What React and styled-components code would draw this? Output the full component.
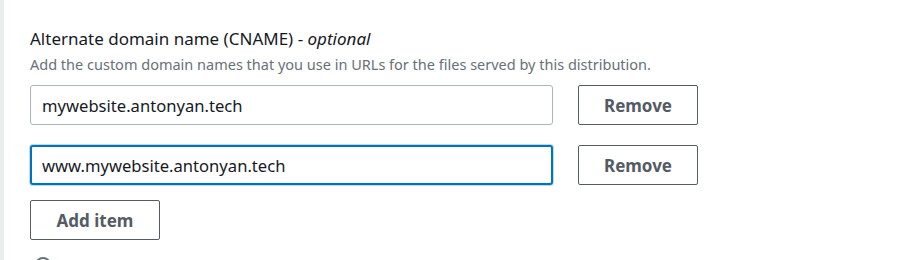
import React from 'react'
import styled, { createGlobalStyle } from 'styled-components'

const GlobalStyle = createGlobalStyle`
  html, body {
    margin: 0;
    padding: 0;
    background: #fff;
    font-family: 'Noto Sans', 'Open Sans', Arial, sans-serif;
  }
`

const Page = styled.div`
  display: flex;
  width: 922px;
  height: 260px;
  overflow: hidden;
  background: #fff;
`

const SideRail = styled.div`
  width: 4px;
  flex: none;
  background: #eaeded;
`

const Section = styled.div`
  flex: 1;
  padding: 28px 0 0 26px;
`

const Label = styled.div`
  font-size: 17px;
  line-height: 22px;
  color: #16191f;

  em {
    font-style: italic;
  }
`

const Description = styled.div`
  font-size: 14.5px;
  line-height: 20px;
  color: #687078;
  margin-top: 4px;
`

const Items = styled.div`
  display: flex;
  flex-direction: column;
  gap: 20px;
  margin-top: 11px;
`

const Row = styled.div`
  display: flex;
  align-items: center;
  gap: 25px;
`

const Input = styled.input`
  box-sizing: border-box;
  width: 523px;
  height: 40px;
  padding: 0 ${({ $focused }) => ($focused ? '10px' : '11px')};
  font-family: inherit;
  font-size: 16.6px;
  color: #16191f;
  background: #fff;
  border: ${({ $focused }) => ($focused ? '2px solid #0073bb' : '1px solid #aab7b8')};
  border-radius: 3px;
  box-shadow: ${({ $focused }) => ($focused ? '0 0 0 1px #b8dcf3' : 'none')};
  outline: none;
`

const Button = styled.button`
  box-sizing: border-box;
  width: ${({ $width }) => $width}px;
  height: 40px;
  padding: 0;
  font-family: inherit;
  font-size: 17px;
  font-weight: 700;
  color: #545b64;
  background: #fff;
  border: 1px solid #545b64;
  border-radius: 2px;
  cursor: pointer;
`

const Footer = styled.div`
  margin-top: 15px;
`

const AddRow = styled.div`
  display: flex;
`

const Radio = styled.span`
  display: block;
  box-sizing: border-box;
  width: 16px;
  height: 16px;
  margin: 17px 0 0 5px;
  border: 2px solid #687078;
  border-radius: 50%;
`

const domains = [
  { value: 'mywebsite.antonyan.tech', focused: false },
  { value: 'www.mywebsite.antonyan.tech', focused: true },
]

export default function App() {
  return (
    <>
      <GlobalStyle />
      <Page>
        <SideRail />
        <Section>
          <Label>
            Alternate domain name (CNAME) - <em>optional</em>
          </Label>
          <Description>
            Add the custom domain names that you use in URLs for the files served by this distribution.
          </Description>
          <Items>
            {domains.map((d, i) => (
              <Row key={i}>
                <Input defaultValue={d.value} $focused={d.focused} />
                <Button $width={120}>Remove</Button>
              </Row>
            ))}
          </Items>
          <Footer>
            <AddRow>
              <Button $width={130}>Add item</Button>
            </AddRow>
            <Radio />
          </Footer>
        </Section>
      </Page>
    </>
  )
}
